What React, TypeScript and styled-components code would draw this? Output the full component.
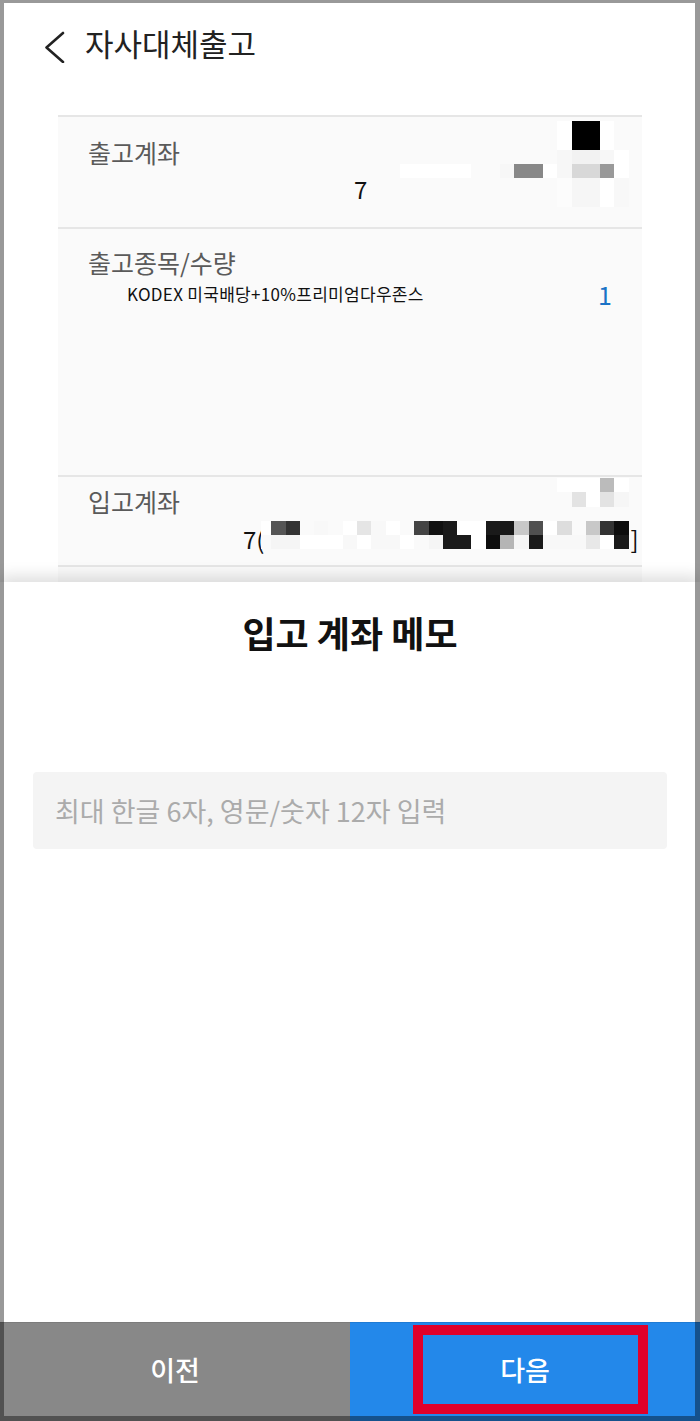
import React, { FC } from "react";
import styled, { createGlobalStyle } from "styled-components";

const GlobalStyle = createGlobalStyle`
  html, body {
    margin: 0;
    padding: 0;
    background: #ffffff;
  }
  * {
    box-sizing: border-box;
  }
  body {
    font-family: "Noto Sans CJK KR", "Noto Sans", sans-serif;
    color: #111;
  }
`;

const Page = styled.div`
  height: 100vh;
  display: flex;
  flex-direction: column;
  background: #ffffff;
`;

// the dark frame of the phone screenshot
const Frame = styled.div`
  position: fixed;
  inset: 0;
  border-style: solid;
  border-color: rgba(0, 0, 0, 0.4);
  border-width: 3px 5px 5px 4px;
  pointer-events: none;
  z-index: 10;
`;

const TopArea = styled.div`
  height: 582px;
  flex: none;
  overflow: hidden;
`;

const Header = styled.div`
  display: flex;
  align-items: center;
  gap: 20px;
  padding: 23px 0 0 43px;
  height: 63px;
`;

const BackIcon = styled.svg`
  width: 22px;
  height: 40px;
  flex: none;
`;

const Title = styled.h1`
  margin: 0;
  font-size: 31px;
  line-height: 40px;
  font-weight: 400;
  color: #222;
`;

const InfoCard = styled.div`
  margin: 52px 58px 0;
  background: #fafafa;
`;

const Row = styled.div<{ $height: number; $pad: number }>`
  position: relative;
  height: ${(p) => p.$height}px;
  padding-top: ${(p) => p.$pad}px;
  border-top: 2px solid #e6e6e6;
`;

const Label = styled.div`
  padding-left: 30px;
  font-size: 25px;
  line-height: 32px;
  color: #5a5a5a;
`;

const Value = styled.div<{ $indent: number; $gap: number }>`
  display: flex;
  padding-left: ${(p) => p.$indent}px;
  margin-top: ${(p) => p.$gap}px;
  font-size: 24px;
  line-height: 32px;
  color: #111;
`;

const MaskGap = styled.span<{ $w: number }>`
  display: inline-block;
  width: ${(p) => p.$w}px;
`;

const StockLine = styled.div`
  display: flex;
  align-items: center;
  justify-content: space-between;
  margin-top: 4px;
  padding: 0 30px 0 69px;
`;

const StockName = styled.span`
  font-size: 17px;
  line-height: 24px;
  letter-spacing: 0.3px;
  color: #111;
`;

const Qty = styled.span`
  font-size: 25px;
  line-height: 24px;
  color: #1a73c6;
`;

// pixelated privacy blocks sitting over the account numbers
const Mosaic = styled.div<{ $cols: number; $first: number; $left: number; $top: number }>`
  position: absolute;
  left: ${(p) => p.$left}px;
  top: ${(p) => p.$top}px;
  display: grid;
  grid-template-columns: ${(p) => p.$first}px repeat(${(p) => p.$cols - 1}, 14.3px);
  grid-auto-rows: 14.3px;
`;

const Cell = styled.span<{ $c: string }>`
  background: ${(p) => p.$c || "transparent"};
`;

const Sheet = styled.div`
  position: relative;
  z-index: 1;
  flex: 1;
  display: flex;
  flex-direction: column;
  background: #ffffff;
  box-shadow: 0 -6px 14px rgba(0, 0, 0, 0.13);
  padding-top: 28px;
`;

const SheetTitle = styled.h2`
  margin: 0;
  text-align: center;
  font-size: 36px;
  line-height: 44px;
  font-weight: 700;
  color: #111;
`;

const MemoInput = styled.input`
  display: block;
  margin: 118px 33px 0 33px;
  height: 77px;
  padding: 0 22px;
  border: none;
  border-radius: 4px;
  background: #f4f4f4;
  font-family: "Noto Sans CJK KR", "Noto Sans", sans-serif;
  font-size: 27px;
  color: #222;
  outline: none;

  &::placeholder {
    color: #ababab;
  }
`;

const ButtonBar = styled.div`
  margin-top: auto;
  display: grid;
  grid-template-columns: 1fr 1fr;
  height: 99px;
`;

const ActionButton = styled.button<{ $primary?: boolean }>`
  position: relative;
  border: none;
  border-top: 1px solid ${(p) => (p.$primary ? "#1f7bd4" : "#7c7c7c")};
  background: ${(p) => (p.$primary ? "#2388ea" : "#888888")};
  color: #ffffff;
  font-family: "Noto Sans CJK KR", "Noto Sans", sans-serif;
  font-size: 27px;
  font-weight: 500;
  padding: 0 0 6px;
`;

const Highlight = styled.span`
  position: absolute;
  left: 63px;
  top: 2px;
  width: 235px;
  height: 89px;
  border: 10px solid #e0002a;
`;

type Grid = string[][];

const row1Mask: Grid = [
  ["", "", "", "", "", "", "", "", "", "", "", "#fff", "#000", "#000", "#fff", ""],
  ["", "", "", "", "", "", "", "", "", "", "", "#fff", "#000", "#000", "#fff", ""],
  ["", "", "", "", "", "", "", "", "", "", "", "#f7f7f7", "#f2f2f2", "#f2f2f2", "#f7f7f7", "#fff"],
  ["#fff", "#fff", "#fff", "#fff", "#fff", "", "", "#f7f7f7", "#888", "#888", "#fff", "#f7f7f7", "#d8d8d8", "#d8d8d8", "#999", "#fff"],
  ["", "", "", "", "", "", "", "", "", "", "", "#fcfcfc", "#f6f6f6", "#f6f6f6", "#fff", "#f8f8f8"],
  ["", "", "", "", "", "", "", "", "", "", "", "#fcfcfc", "#f6f6f6", "#f6f6f6", "#fff", "#f8f8f8"],
];

const blank = (n: number) => Array.from({ length: n }, () => "");

const row3Mask: Grid = [
  [...blank(21), "#fff", "#fff", "#fff", "#bbb", "#fff"],
  [...blank(21), "#fafafa", "#e3e3e3", "#fff", "#e3e3e3", "#f6f6f6"],
  blank(26),
  [
    "#fff", "#555", "#333", "#fafafa", "#f8f8f8", "#fafafa", "#fff", "#e5e5e5", "#f8f8f8",
    "#fff", "#fafafa", "#444", "#111", "#1a1a1a", "#fff", "#fff", "#1a1a1a", "#181818",
    "#c8c8c8", "#505050", "#fff", "#ddd", "#fafafa", "#c8c8c8", "#333", "#0d0d0d",
  ],
  [
    "#fafafa", "#f5f5f5", "#f5f5f5", "#fff", "#fff", "#fff", "#f8f8f8", "#fff", "#f8f8f8",
    "#f8f8f8", "#fff", "#fafafa", "#f5f5f5", "#1a1a1a", "#1a1a1a", "#fff", "#0d0d0d", "#b5b5b5",
    "#f5f5f5", "#1a1a1a", "#f8f8f8", "#f8f8f8", "#f8f8f8", "#e8e8e8", "#fff", "#1a1a1a",
  ],
];

const MaskBlock: FC<{ grid: Grid; left: number; top: number; first?: number }> = ({
  grid,
  left,
  top,
  first = 14.3,
}) => (
  <Mosaic $cols={grid[0].length} $first={first} $left={left} $top={top}>
    {grid.map((line, r) => line.map((c, i) => <Cell key={`${r}-${i}`} $c={c} />))}
  </Mosaic>
);

export default function App() {
  return (
    <>
      <GlobalStyle />
      <Page>
        <TopArea>
          <Header>
            <BackIcon viewBox="0 0 22 40">
              <polyline
                points="20,10 3.5,24.5 20,39"
                fill="none"
                stroke="#222"
                strokeWidth="2.6"
                strokeLinecap="round"
                strokeLinejoin="round"
              />
            </BackIcon>
            <Title>자사대체출고</Title>
          </Header>

          <InfoCard>
            <Row $height={112} $pad={19}>
              <Label>출고계좌</Label>
              <Value $indent={296} $gap={5}>
                7<MaskGap $w={250} />
              </Value>
              <MaskBlock grid={row1Mask} left={342} top={4} />
            </Row>

            <Row $height={248} $pad={17}>
              <Label>출고종목/수량</Label>
              <StockLine>
                <StockName>KODEX 미국배당+10%프리미엄다우존스</StockName>
                <Qty>1</Qty>
              </StockLine>
            </Row>

            <Row $height={90} $pad={8}>
              <Label>입고계좌</Label>
              <Value $indent={185} $gap={6}>
                7(<MaskGap $w={366} />]
              </Value>
              <MaskBlock grid={row3Mask} left={203} top={1} first={10.3} />
            </Row>

            <Row $height={60} $pad={8} />
          </InfoCard>
        </TopArea>

        <Sheet>
          <SheetTitle>입고 계좌 메모</SheetTitle>
          <MemoInput placeholder="최대 한글 6자, 영문/숫자 12자 입력" />
          <ButtonBar>
            <ActionButton>이전</ActionButton>
            <ActionButton $primary>
              다음
              <Highlight />
            </ActionButton>
          </ButtonBar>
        </Sheet>
      </Page>
      <Frame />
    </>
  );
}
